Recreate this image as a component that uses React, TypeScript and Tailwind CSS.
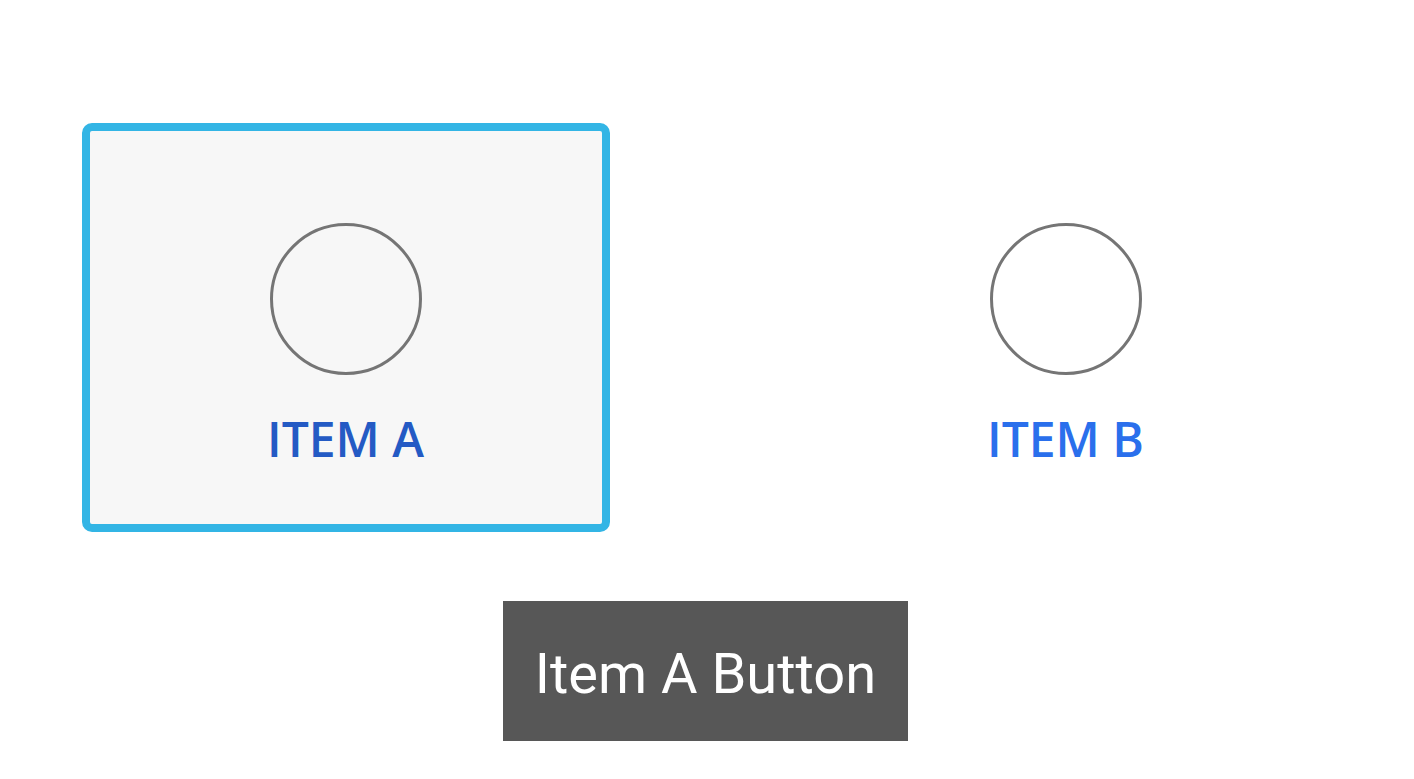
type ItemProps = {
    label: string;
    selected: boolean;
}

function Item(props: ItemProps) {
    return (
        <div
            className={
                props.selected
                    ? 'w-[528px] h-[409px] rounded-[10px] border-[8px] border-[#33b5e5] bg-[#f7f7f7] flex flex-col items-center pt-[92px]'
                    : 'w-[528px] h-[409px] rounded-[10px] border-[8px] border-transparent flex flex-col items-center pt-[92px]'
            }
        >
            <div className="w-[152px] h-[152px] rounded-full border-[3px] border-[#757575]" />
            <span
                className={
                    props.selected
                        ? 'mt-[40px] text-[48px] leading-none font-semibold text-[#245ac4]'
                        : 'mt-[40px] text-[48px] leading-none font-semibold text-[#2a6fec]'
                }
                style={{ fontFamily: '"Open Sans", "Noto Sans", sans-serif' }}
            >
                {props.label}
            </span>
        </div>
    );
}

export default function App() {
    return (
        <div className="w-[1414px] h-[779px] bg-white flex flex-col items-center pt-[123px] pr-[3px]">
            <div className="flex gap-[192px]">
                <Item label="ITEM A" selected />
                <Item label="ITEM B" selected={false} />
            </div>

            <button
                className="mt-[69px] w-[405px] h-[140px] pt-[5px] bg-[#575757] text-white text-[56px] flex items-center justify-center"
                style={{ fontFamily: 'Roboto, "Liberation Sans", sans-serif' }}
            >
                Item A Button
            </button>
        </div>
    );
}
